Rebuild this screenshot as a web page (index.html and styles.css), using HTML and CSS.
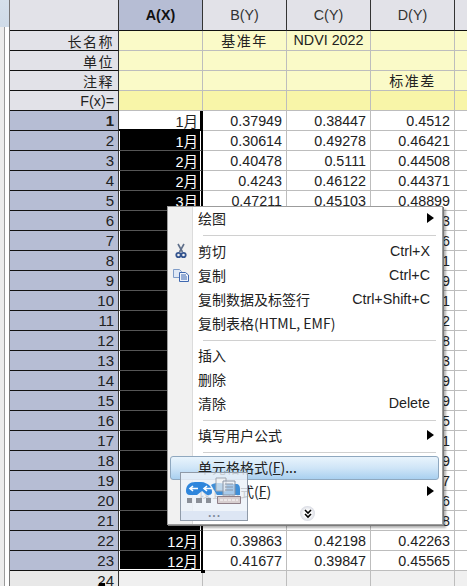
FILE: index.html
```html
<!DOCTYPE html>
<html lang="zh-CN">
  <head>
    <meta charset="UTF-8" />
    <title>Worksheet</title>
    <link rel="stylesheet" href="styles.css">
  </head>
  <body>
    <div class="side"></div>
    <div class="sheet">
      <div class="grid">
        <div class="cell corner"></div>
        <div class="cell head sel-head"><b>A(X)</b></div>
        <div class="cell head">B(Y)</div>
        <div class="cell head">C(Y)</div>
        <div class="cell head">D(Y)</div>
        <div class="cell head"></div>

        <div class="cell label">长名称</div>
        <div class="cell meta"></div>
        <div class="cell meta center cjk">基准年</div>
        <div class="cell meta center">NDVI 2022</div>
        <div class="cell meta"></div>
        <div class="cell meta"></div>

        <div class="cell label">单位</div>
        <div class="cell meta"></div>
        <div class="cell meta"></div>
        <div class="cell meta"></div>
        <div class="cell meta"></div>
        <div class="cell meta"></div>

        <div class="cell label">注释</div>
        <div class="cell meta"></div>
        <div class="cell meta"></div>
        <div class="cell meta"></div>
        <div class="cell meta center cjk">标准差</div>
        <div class="cell meta"></div>

        <div class="cell label latin">F(x)=</div>
        <div class="cell meta fx"></div>
        <div class="cell meta fx"></div>
        <div class="cell meta fx"></div>
        <div class="cell meta fx"></div>
        <div class="cell meta fx"></div>

        <div class="cell num active-row"><b>1</b></div>
        <div class="cell active">1月</div>
        <div class="cell">0.37949</div><div class="cell">0.38447</div><div class="cell">0.4512</div><div class="cell"></div>
        <div class="cell num">2</div><div class="cell picked">1月</div>
        <div class="cell">0.30614</div><div class="cell">0.49278</div><div class="cell">0.46421</div><div class="cell"></div>
        <div class="cell num">3</div><div class="cell picked">2月</div>
        <div class="cell">0.40478</div><div class="cell">0.5111</div><div class="cell">0.44508</div><div class="cell"></div>
        <div class="cell num">4</div><div class="cell picked">2月</div>
        <div class="cell">0.4243</div><div class="cell">0.46122</div><div class="cell">0.44371</div><div class="cell"></div>
        <div class="cell num">5</div><div class="cell picked">3月</div>
        <div class="cell">0.47211</div><div class="cell">0.45103</div><div class="cell">0.48899</div><div class="cell"></div>
        <div class="cell num">6</div><div class="cell picked"></div>
        <div class="cell"></div><div class="cell"></div><div class="cell">3</div><div class="cell"></div>
        <div class="cell num">7</div><div class="cell picked"></div>
        <div class="cell"></div><div class="cell"></div><div class="cell">6</div><div class="cell"></div>
        <div class="cell num">8</div><div class="cell picked"></div>
        <div class="cell"></div><div class="cell"></div><div class="cell">1</div><div class="cell"></div>
        <div class="cell num">9</div><div class="cell picked"></div>
        <div class="cell"></div><div class="cell"></div><div class="cell">9</div><div class="cell"></div>
        <div class="cell num">10</div><div class="cell picked"></div>
        <div class="cell"></div><div class="cell"></div><div class="cell">1</div><div class="cell"></div>
        <div class="cell num">11</div><div class="cell picked"></div>
        <div class="cell"></div><div class="cell"></div><div class="cell">2</div><div class="cell"></div>
        <div class="cell num">12</div><div class="cell picked"></div>
        <div class="cell"></div><div class="cell"></div><div class="cell">8</div><div class="cell"></div>
        <div class="cell num">13</div><div class="cell picked"></div>
        <div class="cell"></div><div class="cell"></div><div class="cell">3</div><div class="cell"></div>
        <div class="cell num">14</div><div class="cell picked"></div>
        <div class="cell"></div><div class="cell"></div><div class="cell">9</div><div class="cell"></div>
        <div class="cell num">15</div><div class="cell picked"></div>
        <div class="cell"></div><div class="cell"></div><div class="cell">9</div><div class="cell"></div>
        <div class="cell num">16</div><div class="cell picked"></div>
        <div class="cell"></div><div class="cell"></div><div class="cell">5</div><div class="cell"></div>
        <div class="cell num">17</div><div class="cell picked"></div>
        <div class="cell"></div><div class="cell"></div><div class="cell">1</div><div class="cell"></div>
        <div class="cell num">18</div><div class="cell picked"></div>
        <div class="cell"></div><div class="cell"></div><div class="cell">9</div><div class="cell"></div>
        <div class="cell num">19</div><div class="cell picked"></div>
        <div class="cell"></div><div class="cell"></div><div class="cell">7</div><div class="cell"></div>
        <div class="cell num">20</div><div class="cell picked"></div>
        <div class="cell"></div><div class="cell"></div><div class="cell">6</div><div class="cell"></div>
        <div class="cell num">21</div><div class="cell picked"></div>
        <div class="cell"></div><div class="cell"></div><div class="cell">8</div><div class="cell"></div>
        <div class="cell num">22</div><div class="cell picked">12月</div>
        <div class="cell">0.39863</div><div class="cell">0.42198</div><div class="cell">0.42263</div><div class="cell"></div>
        <div class="cell num">23</div><div class="cell picked last">12月</div>
        <div class="cell">0.41677</div><div class="cell">0.39847</div><div class="cell">0.45565</div><div class="cell"></div>
        <div class="cell num empty-row">24</div>
        <div class="cell empty"></div><div class="cell empty"></div><div class="cell empty"></div><div class="cell empty"></div><div class="cell empty"></div>
      </div>
      <div class="sel-handle"></div>
      <div class="row-mark"></div>
    </div>

    <div class="menu">
      <div class="item"><span class="text">绘图</span><span class="arrow"></span></div>
      <div class="sep sep-wide"></div>
      <div class="item">
        <svg class="icon" viewBox="0 0 16 16">
          <path d="M5 1 L9.5 9 M11 1 L6.5 9" fill="none" stroke="#5f6f8a" stroke-width="1.6" />
          <circle cx="5.5" cy="12" r="2.2" fill="none" stroke="#34548f" stroke-width="1.8" />
          <circle cx="10.5" cy="12" r="2.2" fill="none" stroke="#34548f" stroke-width="1.8" />
        </svg>
        <span class="text">剪切</span><span class="key">Ctrl+X</span>
      </div>
      <div class="item">
        <svg class="icon" viewBox="0 0 16 16">
          <path d="M0.5 2.5 H6.5 L8.5 4.5 V10.5 H0.5 Z" fill="#dfe8f5" stroke="#7f9cc8" />
          <path d="M6.5 5.5 H12.5 L15.5 8 V14.5 H6.5 Z" fill="#eef3fb" stroke="#3f68b0" />
          <path d="M8 8 H13 M8 10 H14 M8 12 H14" stroke="#3f68b0" />
        </svg>
        <span class="text">复制</span><span class="key">Ctrl+C</span>
      </div>
      <div class="item"><span class="text">复制数据及标签行</span><span class="key">Ctrl+Shift+C</span></div>
      <div class="item"><span class="text">复制表格(HTML, EMF)</span></div>
      <div class="sep"></div>
      <div class="item"><span class="text">插入</span></div>
      <div class="item"><span class="text">删除</span></div>
      <div class="item"><span class="text">清除</span><span class="key">Delete</span></div>
      <div class="sep"></div>
      <div class="item"><span class="text">填写用户公式</span><span class="arrow"></span></div>
      <div class="sep"></div>
      <div class="item hot"><span class="text">单元格格式(<u>F</u>)...</span></div>
      <div class="item"><span class="text">设置格式(<u>F</u>)</span><span class="arrow"></span></div>
      <div class="more">
        <svg viewBox="0 0 10 10" width="10" height="10">
          <path d="M2 1 L5 4 L8 1 M2 5 L5 8 L8 5" fill="none" stroke="#000" stroke-width="1.6" />
        </svg>
      </div>
    </div>

    <div class="thumb">
      <div class="thumb-body">
        <svg class="thumb-icon" viewBox="0 0 66 38">
          <path d="M30 12 C34 9 40 10 44 11 H55 C58 11 59 13 59 16 V22 H36 Z" fill="#3f8fd8" />
          <path d="M5 18 C5 12 9 9 14 9 H20 C24 9 26 11 28 12 C30 14 31 16 31 19 C31 22 28 22 26 22 L21 18 L16 22 H9 C6 22 5 20 5 18 Z" fill="#2f86dc" />
          <path d="M9 15.5 H17 M12 13 L9 15.5 L12 18 M23 15.5 H31 M26 13 L23 15.5 L26 18" fill="none" stroke="#fff" stroke-width="1.6" />
          <path d="M6 25 H11 V30 H6 Z M15 25 H21 V30 H15 Z M25 25 H30 V30 H25 Z" fill="#8a8f98" />
          <path d="M35 5 H45 V18 H35 Z" fill="#f4f4f4" fill-opacity="0.7" stroke="#a0a6b0" />
          <path d="M42 8 H54 V22 H42 Z" fill="#eef1f6" fill-opacity="0.6" stroke="#8a94a4" />
          <path d="M44 11 H52 M44 14 H52 M44 17 H52" stroke="#8a94a4" />
          <path d="M36.5 23.5 H59.5 V30.5 H36.5 Z" fill="#d8cfd0" stroke="#8f7f88" />
          <path d="M39 27 H57" stroke="#fff" stroke-dasharray="3 1" />
        </svg>
      </div>
      <div class="thumb-foot">• • •</div>
    </div>
  </body>
</html>
```

FILE: styles.css
```css
* {
  box-sizing: border-box;
  margin: 0;
  padding: 0;
}
html,
body {
  height: 100%;
  overflow: hidden;
}
body {
  position: relative;
  display: flex;
  background: #fff;
  font-family: "Liberation Sans", "Noto Sans CJK SC", sans-serif;
  font-size: 14.3px;
  color: #222;
}
/* left edge of the window */
.side {
  width: 10px;
  flex: none;
  background:
    linear-gradient(180deg, #d5e0ea, #cfdbe8) 0 0 / 100% 27px no-repeat,
    linear-gradient(90deg, #ececec 0, #ececec 4px, #9a9a9a 4px, #9a9a9a 5px, #fff 5px);
  border-right: 1px solid #777;
}
.sheet {
  position: relative;
  flex: 1;
  overflow: hidden;
}
/* worksheet grid */
.grid {
  display: grid;
  grid-template-columns: 109px 84px 84px 84px 84px 84px;
  grid-template-rows: 31px repeat(28, 20px);
}
.cell {
  display: flex;
  align-items: center;
  justify-content: flex-end;
  padding-right: 4px;
  background: #fff;
  border-right: 1px solid #bdbdbd;
  border-bottom: 1px solid #bdbdbd;
  white-space: nowrap;
}
.corner,
.head {
  background: #e2e2e8;
  border-bottom: 1px solid #111;
  border-right: 1px solid #333;
}
.head {
  justify-content: center;
  padding: 0;
  color: #333;
}
.sel-head {
  background: #b6bdd4;
  color: #111;
}
.label {
  background: #e2e2e8;
  border-right: 1px solid #333;
  border-bottom: 1px solid #111;
  letter-spacing: 1.5px;
  font-size: 14px;
  padding-right: 4px;
}
.label.latin {
  letter-spacing: 0;
  font-size: 14.3px;
  padding-right: 4px;
}
.meta {
  background: #fafac8;
}
.meta.fx {
  background: #f8f5a8;
}
.center {
  justify-content: center;
  padding: 0 0 2px;
}
.cjk {
  font-size: 14px;
  letter-spacing: 1.5px;
}
.num {
  background: #b6bdd4;
  border-right: 1px solid #333;
  border-bottom: 1px solid #111;
  font-size: 15px;
}
.empty-row {
  background: #e8e8e8;
}
.empty {
  background: #f0f0f0;
}
.picked {
  background: #000;
  color: #fff;
  border-right: 2px solid #000;
  border-bottom: 1px solid #555;
  box-shadow: inset 1px 0 #fff, inset -1px 0 #fff;
  font-size: 14.5px;
  padding-right: 3px;
}
.picked.last {
  border-bottom: 1px solid #000;
  box-shadow: inset 1px 0 #fff, inset -1px 0 #fff, inset 0 -1px #fff;
}
.active {
  background: #fff;
  color: #222;
  border-bottom: 2px solid #000;
  border-right: 3px solid #000;
  font-size: 14.5px;
  padding-right: 2px;
}
.sel-handle {
  position: absolute;
  left: 191px;
  top: 570px;
  width: 4px;
  height: 3px;
  background: #000;
}
.row-mark {
  position: absolute;
  left: 89px;
  top: 583px;
  width: 6px;
  height: 3px;
  background: #000;
}
/* right click menu */
.menu {
  position: absolute;
  left: 167px;
  top: 206px;
  width: 276px;
  height: 319px;
  padding: 0 3px 0 2px;
  background: linear-gradient(90deg, #f1f1f1 0, #f1f1f1 24px, #dcdcdc 24px, #dcdcdc 25px, #fff 25px);
  border: 1px solid #9c9c9c;
  box-shadow: 1px 1px 0 #7a7a7a, 3px 3px 2px rgba(0, 0, 0, 0.3);
  font-family: "Noto Sans CJK SC", "Liberation Sans", sans-serif;
  font-size: 14px;
  color: #222;
}
.item {
  position: relative;
  display: flex;
  align-items: center;
  height: 24px;
  padding: 0 9px 2px 28px;
}
.item .text {
  flex: 1;
  white-space: nowrap;
}
.key {
  font-family: "Liberation Sans", sans-serif;
  font-size: 14.3px;
}
.icon {
  position: absolute;
  left: 3px;
  top: 3px;
  width: 16px;
  height: 16px;
}
.arrow {
  width: 0;
  height: 0;
  margin-right: -4px;
  border-left: 7px solid #000;
  border-top: 5px solid transparent;
  border-bottom: 5px solid transparent;
}
.sep {
  height: 1px;
  margin: 4px 3px 3px 33px;
  background: #d0d0d0;
}
.sep-wide {
  margin-bottom: 4px;
}
.hot {
  margin-left: 0;
  padding-left: 27px;
  border: 1px solid #8fa8bf;
  border-radius: 3px;
  background: linear-gradient(180deg, #e9f4fc 0, #cfe5f7 50%, #a9d0f0 100%);
}
.more {
  display: flex;
  justify-content: center;
  align-items: center;
  width: 15px;
  height: 15px;
  margin: 2px 0 0 130px;
  border-radius: 50%;
  background: radial-gradient(circle, #fff 30%, #bcc0ce 100%);
}
/* floating drag preview over the menu */
.thumb {
  position: absolute;
  left: 180px;
  top: 472px;
  width: 68px;
  height: 49px;
  border: 1px solid #8f9aa8;
  background: rgba(236, 241, 249, 0.82);
  display: flex;
  flex-direction: column;
}
.thumb-body {
  flex: 1;
}
.thumb-icon {
  display: block;
  width: 66px;
  height: 38px;
}
.thumb-foot {
  height: 9px;
  line-height: 9px;
  text-align: center;
  font-size: 7px;
  color: #7a8494;
  background: #dde6f4;
}
```
